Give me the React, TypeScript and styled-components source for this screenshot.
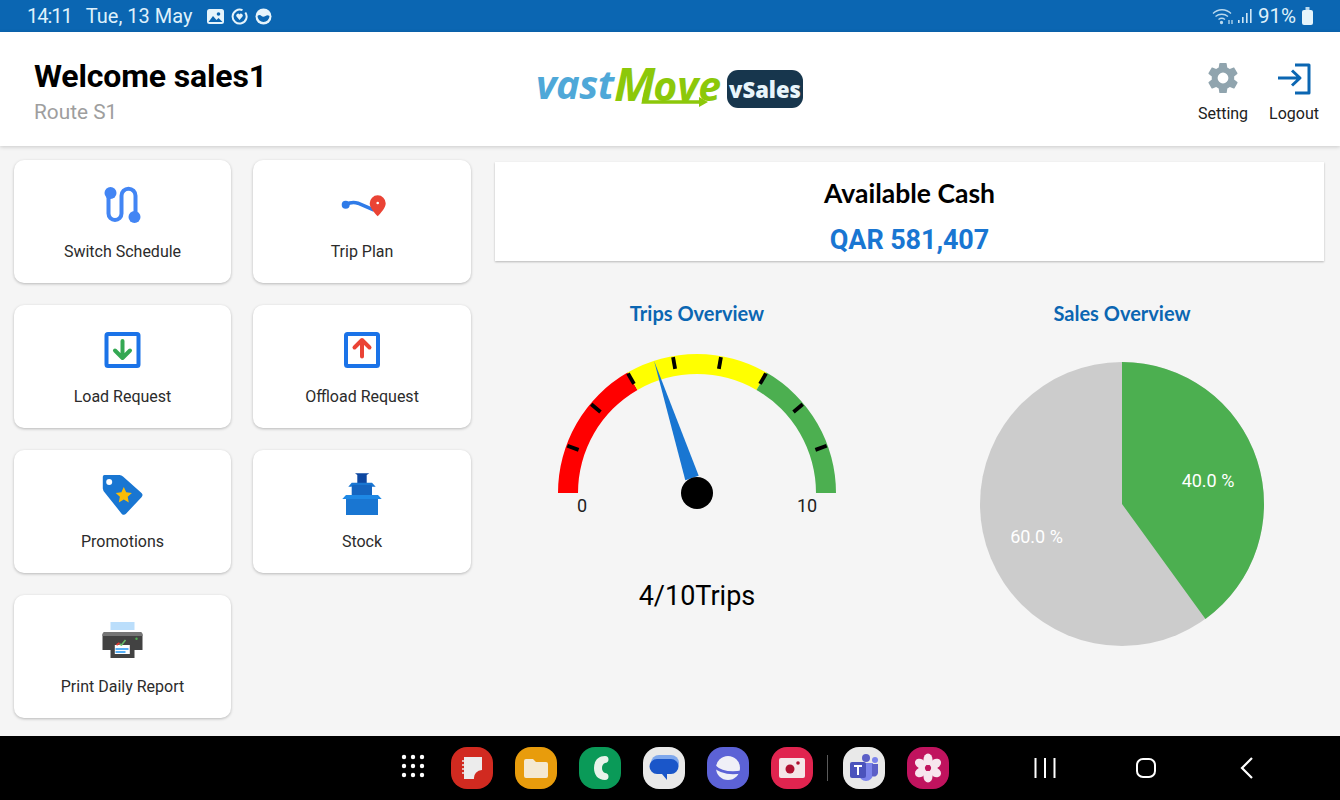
import React from 'react';
import styled, { createGlobalStyle } from 'styled-components';

const GlobalStyle = createGlobalStyle`
  html, body {
    margin: 0;
    padding: 0;
    background: #f5f5f5;
    font-family: Roboto, "Liberation Sans", sans-serif;
  }
`;

const Screen = styled.div`
  width: 1340px;
  height: 800px;
  display: flex;
  flex-direction: column;
  overflow: hidden;
  background: #f5f5f5;
`;

const StatusBar = styled.div`
  height: 32px;
  flex: none;
  background: #0b66b2;
  color: #dff1fb;
  display: flex;
  align-items: center;
  justify-content: space-between;
  padding: 0 27px;
  font-size: 20px;
`;

const StatusGroup = styled.div`
  display: flex;
  align-items: center;
`;

const StatusTime = styled.span`
  letter-spacing: -1px;
`;

const StatusDate = styled.span`
  margin-left: 14px;
`;

const StatusIcons = styled.div`
  display: flex;
  align-items: center;
  gap: 7px;
  margin-left: 15px;
`;

const StatusPercent = styled.span`
  margin-left: 6px;
  font-size: 20.5px;
`;

const BatteryIcon = styled.svg`
  margin-left: 6px;
`;

const Header = styled.header`
  height: 114px;
  flex: none;
  background: #fff;
  box-shadow: 0 1px 4px rgba(0, 0, 0, 0.18);
  display: grid;
  grid-template-columns: 1fr auto 1fr;
  align-items: center;
  padding: 0 21px 0 34px;
  position: relative;
`;

const Greeting = styled.div`
  display: flex;
  flex-direction: column;
  gap: 4px;
  padding-top: 3px;
`;

const Welcome = styled.div`
  font-size: 32px;
  font-weight: 700;
  line-height: 38px;
  letter-spacing: -0.15px;
  color: #000;
`;

const RouteName = styled.div`
  font-size: 20.800px;
  line-height: 26px;
  color: #9e9e9e;
`;

const Logo = styled.div`
  position: relative;
  width: 267px;
  height: 46px;
  margin-right: 14px;
  display: flex;
  align-items: center;
  font-family: "Open Sans", sans-serif;
  font-style: italic;
  font-weight: 700;
`;

const LogoVast = styled.span`
  width: 78px;
  flex: none;
  margin-top: -10px;
  font-size: 40px;
  line-height: 46px;
  letter-spacing: -0.5px;
  color: #4fa8d8;
`;

const LogoMove = styled.span`
  width: 113px;
  flex: none;
  margin-top: -10px;
  font-size: 41px;
  line-height: 46px;
  color: #8cc80a;
`;

const LogoBigLetter = styled.span`
  font-size: 47px;
  letter-spacing: -2px;
`;

const LogoBadge = styled.span`
  width: 76px;
  height: 38px;
  flex: none;
  border-radius: 11px;
  background: #17364d;
  color: #e8f5fb;
  font-style: normal;
  font-weight: 800;
  font-size: 22px;
  display: flex;
  align-items: center;
  justify-content: center;
`;

const LogoArrow = styled.svg`
  position: absolute;
  left: 0;
  top: 0;
`;

const HeaderActions = styled.div`
  display: flex;
  justify-content: flex-end;
  gap: 21px;
  padding-top: 6px;
`;

const HeaderAction = styled.div`
  display: flex;
  flex-direction: column;
  align-items: center;
  gap: 8px;
  font-size: 16px;
  line-height: 20px;
  color: #212121;
`;

const Body = styled.main`
  flex: 1;
  display: flex;
  min-height: 0;
`;

const MenuGrid = styled.div`
  width: 495px;
  flex: none;
  box-sizing: border-box;
  padding: 14px 24px 0 14px;
  display: grid;
  grid-template-columns: 217px 218px;
  grid-auto-rows: 123px;
  column-gap: 22px;
  row-gap: 22px;
  align-content: start;
`;

const MenuCard = styled.div`
  background: #fff;
  border-radius: 10px;
  box-shadow: 0 1px 3px rgba(0, 0, 0, 0.25);
  display: flex;
  flex-direction: column;
  align-items: center;
  padding-top: 23px;
  box-sizing: border-box;
`;

const MenuLabel = styled.div`
  margin-top: 11px;
  font-size: 16px;
  line-height: 20px;
  color: #2b2b2b;
`;

const Content = styled.section`
  flex: 1;
  display: flex;
  flex-direction: column;
  padding: 16px 16px 0 0;
  min-width: 0;
`;

const CashCard = styled.div`
  height: 99px;
  background: #fff;
  box-shadow: 0 1px 2px rgba(0, 0, 0, 0.25);
  display: flex;
  flex-direction: column;
  align-items: center;
  padding-top: 14px;
  box-sizing: border-box;
`;

const CashTitle = styled.div`
  font-family: Lato, "Open Sans", sans-serif;
  font-size: 26.500px;
  font-weight: 700;
  line-height: 34px;
  color: #000;
`;

const CashValue = styled.div`
  margin-top: 13px;
  font-size: 27px;
  font-weight: 700;
  line-height: 34px;
  letter-spacing: -0.1px;
  color: #1976d2;
`;

const Charts = styled.div`
  display: grid;
  grid-template-columns: 404px 1fr;
  margin-top: 39px;
`;

const ChartColumn = styled.div<{ $inset?: number }>`
  display: flex;
  flex-direction: column;
  align-items: center;
  padding-left: ${(p) => p.$inset ?? 0}px;
`;

const ChartTitle = styled.div`
  font-family: Lato, "Open Sans", sans-serif;
  font-size: 20px;
  font-weight: 700;
  line-height: 26px;
  padding-bottom: 2px;
  color: #0b66b2;
`;

const GaugeWrap = styled.div`
  margin-top: 25px;
  height: 170px;
`;

const GaugeCaption = styled.div`
  margin-top: 55px;
  font-size: 27px;
  line-height: 36px;
  color: #000;
`;

const PieWrap = styled.div`
  margin-top: 34px;
`;

const NavBar = styled.nav`
  height: 64px;
  flex: none;
  background: #000;
  display: flex;
  align-items: center;
  padding-left: 401px;
`;

const AppTile = styled.div<{ $bg: string }>`
  width: 42px;
  height: 42px;
  border-radius: 16px;
  background: ${(p) => p.$bg};
  flex: none;
  margin-left: 22px;
  display: flex;
  align-items: center;
  justify-content: center;
`;

const GridButton = styled.div`
  width: 27px;
  flex: none;
  margin-right: 1px;
`;

const Divider = styled.div`
  width: 1px;
  height: 26px;
  background: #5a5a5a;
  margin-left: 14px;
  margin-right: -7px;
  flex: none;
`;

const NavKeys = styled.div`
  display: flex;
  align-items: center;
  margin-left: 84px;
  gap: 77px;
`;

const GAUGE_X = 697;
const GAUGE_Y = 493;

const polar = (r: number, deg: number) => {
  const a = (deg * Math.PI) / 180;
  return [GAUGE_X - r * Math.cos(a), GAUGE_Y - r * Math.sin(a)];
};

const arcPath = (outer: number, inner: number, from: number, to: number) => {
  const [x1, y1] = polar(outer, from);
  const [x2, y2] = polar(outer, to);
  const [x3, y3] = polar(inner, to);
  const [x4, y4] = polar(inner, from);
  return `M${x1} ${y1}A${outer} ${outer} 0 0 1 ${x2} ${y2}L${x3} ${y3}A${inner} ${inner} 0 0 0 ${x4} ${y4}Z`;
};

// svg coordinates below are page pixels, the viewBox does the shifting
function Gauge() {
  const ticks = [20, 40, 60, 80, 100, 120, 140, 160];
  const [tipX, tipY] = polar(139, 72);
  return (
    <svg width="290" height="170" viewBox="552 353 290 170">
      <path d={arcPath(139, 119, 0, 60)} fill="#ff0000" />
      <path d={arcPath(139, 119, 60, 120)} fill="#ffff00" />
      <path d={arcPath(139, 119, 120, 180)} fill="#4caf50" />
      {ticks.map((d) => {
        const [x1, y1] = polar(138, d);
        const [x2, y2] = polar(126, d);
        return <line key={d} x1={x1} y1={y1} x2={x2} y2={y2} stroke="#000" strokeWidth="3.8" />;
      })}
      <polygon points={`${tipX},${tipY} 698.7,475.8 685.3,480.2`} fill="#1976d2" />
      <circle cx={GAUGE_X} cy={GAUGE_Y} r="16" fill="#000" />
      <text x="582" y="512" textAnchor="middle" fontFamily="Roboto, sans-serif" fontSize="18" fill="#212121">0</text>
      <text x="807" y="512" textAnchor="middle" fontFamily="Roboto, sans-serif" fontSize="18" fill="#212121">10</text>
    </svg>
  );
}

function Pie() {
  const r = 142;
  const a = 2 * Math.PI * 0.4;
  const x = r + r * Math.sin(a);
  const y = r - r * Math.cos(a);
  return (
    <svg width="284" height="284" viewBox="0 0 284 284">
      <circle cx={r} cy={r} r={r} fill="#cccccc" />
      <path d={`M${r} ${r}L${r} 0A${r} ${r} 0 0 1 ${x} ${y}Z`} fill="#4caf50" />
      <text x="228" y="125" textAnchor="middle" fontFamily="Roboto, sans-serif" fontSize="18" fill="#fff">40.0 %</text>
      <text x="56.500" y="181" textAnchor="middle" fontFamily="Roboto, sans-serif" fontSize="18" fill="#fff">60.0 %</text>
    </svg>
  );
}

const SwitchIcon = () => (
  <svg width="48" height="48" viewBox="98.500 183 48 48">
    <path d="M108 193v20.500a6.500 6.500 0 0 0 13 0V195.700a6.900 6.900 0 0 1 14 0V217" fill="none" stroke="#4285f4" strokeWidth="4" />
    <circle cx="110" cy="193" r="6" fill="#4285f4" />
    <circle cx="134" cy="217" r="6" fill="#4285f4" />
  </svg>
);

const TripIcon = () => (
  <svg width="48" height="48" viewBox="338 183 48 48">
    <path d="M346 204.700c4-2.400 8-2.600 12-1.500l15 6.500" fill="none" stroke="#2f7be8" strokeWidth="3.600" strokeLinecap="round" />
    <circle cx="345.700" cy="204.700" r="4" fill="#2f7be8" />
    <path d="M377.700 195.300a8 8 0 0 1 8 8c0 4.600-4.800 9.500-8 13-3.200-3.500-8-8.400-8-13a8 8 0 0 1 8-8Z" fill="#ea4335" />
    <circle cx="377.700" cy="203" r="1.300" fill="#fff" />
  </svg>
);

const LoadIcon = () => (
  <svg width="48" height="48" viewBox="98.500 328 48 48">
    <rect x="106" y="334" width="32" height="32" rx="1.500" fill="#fff" stroke="#1b73e8" strokeWidth="4" />
    <path d="M122 341v17M114.500 350.500l7.500 7.500 7.500-7.500" fill="none" stroke="#34a853" strokeWidth="4" strokeLinecap="round" strokeLinejoin="round" />
  </svg>
);

const OffloadIcon = () => (
  <svg width="48" height="48" viewBox="338 328 48 48">
    <rect x="346" y="334" width="32" height="32" rx="1.500" fill="#fff" stroke="#1b73e8" strokeWidth="4" />
    <path d="M362 356.500V340M354.500 347.500l7.500-7.500 7.500 7.500" fill="none" stroke="#ea4335" strokeWidth="4" strokeLinecap="round" strokeLinejoin="round" />
  </svg>
);

const TagIcon = () => (
  <svg width="48" height="48" viewBox="98.500 473 48 48">
    <path d="M104 475h15a5 5 0 0 1 3.500 1.500l18.500 16.500a3 3 0 0 1 0 4.200l-15.500 16.500a3 3 0 0 1-4.200.2L105 493.500a7 7 0 0 1-2.700-5V476.700a1.700 1.700 0 0 1 1.700-1.700Z" fill="#1976d2" />
    <circle cx="108.700" cy="482" r="3" fill="#fff" />
    <path d="M123.300 487l2.400 5.200 5.700.7-4.200 3.900 1.100 5.600-5-2.800-5 2.800 1.100-5.600-4.200-3.900 5.700-.7Z" fill="#fbbc05" />
  </svg>
);

const StockIcon = () => (
  <svg width="48" height="48" viewBox="338 473 48 48">
    <path d="M355 473.300h14.300l-2.600 1.700v10h-9.400v-10Z" fill="#0d47a1" />
    <path d="M351.700 485H372v13.300h-20.300Z" fill="#1565c0" />
    <path d="M351.700 482.700h20.300l3.700 4H372l-.8-1.700h-18.700l-.8 1.700h-3.400Z" fill="#1976d2" />
    <path d="M346 498h32v17h-32Z" fill="#1976d2" />
    <path d="M346 495h32l3.700 4H342.300Z" fill="#1e88e5" />
  </svg>
);

const PrinterIcon = () => (
  <svg width="48" height="48" viewBox="98.500 618 48 48">
    <rect x="110" y="622" width="24" height="8" fill="#bbdefb" />
    <path d="M105 632h34a3 3 0 0 1 3 3v15h-8v8h-24v-8h-8v-15a3 3 0 0 1 3-3Z" fill="#424242" />
    <path d="M105 632h34a3 3 0 0 1 3 3v1h-40v-1a3 3 0 0 1 3-3Z" fill="#757575" />
    <rect x="114.300" y="645" width="15" height="9" fill="#fff" />
    <path d="M115 649h13M115 652h10" stroke="#2196f3" strokeWidth="1.500" />
    <path d="M119 644l2 1 4-5" fill="none" stroke="#66bb6a" strokeWidth="1.600" />
    <path d="M116 645l3-2" stroke="#e53935" strokeWidth="1.800" />
    <circle cx="136" cy="638.700" r="1.200" fill="#4caf50" />
  </svg>
);

export default function App() {
  return (
    <Screen>
      <GlobalStyle />
      <StatusBar>
        <StatusGroup>
          <StatusTime>14:11</StatusTime>
          <StatusDate>Tue, 13 May</StatusDate>
          <StatusIcons>
            <svg width="17" height="15" viewBox="0 0 17 15">
              <rect width="17" height="15" rx="2.500" fill="#e6f4fb" />
              <circle cx="11.500" cy="5" r="1.800" fill="#0b66b2" />
              <path d="M1.500 13l4.500-6 3.500 4 2-2 4 4Z" fill="#0b66b2" />
            </svg>
            <svg width="17" height="17" viewBox="0 0 17 17">
              <path d="M14.300 4.500a7 7 0 1 1-2.800-2.300" fill="none" stroke="#e6f4fb" strokeWidth="2" />
              <path d="M8.500 12 5.500 8.500a1.800 1.800 0 0 1 3-2 1.800 1.800 0 0 1 3 2Z" fill="#e6f4fb" />
            </svg>
            <svg width="17" height="17" viewBox="0 0 17 17">
              <circle cx="8.500" cy="8.500" r="8" fill="#e6f4fb" />
              <path d="M2.500 8c1.500-1.500 3-1 4 0s2.500 1 4 0 2.500-1 4 0a6 6 0 0 1-12 0Z" fill="#0b66b2" />
            </svg>
          </StatusIcons>
        </StatusGroup>
        <StatusGroup>
          <svg width="22" height="17" viewBox="0 0 22 17" fill="none" stroke="#b9d9ee" strokeWidth="1.300">
            <path d="M1 5.500c5-5 13-5 18 0M3.500 8.500c3.500-3 9-3 12.500 0M6.500 11.500c2-1.500 4.500-1.500 6.500 0" />
            <circle cx="9.500" cy="14.500" r="1" fill="#b9d9ee" />
            <path d="M17 12v4M20 16v-4" />
          </svg>
          <svg width="18" height="16" viewBox="0 0 18 16" fill="#cfe6f5">
            <rect x="4" y="12" width="1.600" height="3" />
            <rect x="8" y="9" width="1.600" height="6" />
            <rect x="12" y="5" width="1.600" height="10" />
            <rect x="16" y="1" width="1.600" height="14" />
          </svg>
          <StatusPercent>91%</StatusPercent>
          <BatteryIcon width="11" height="18" viewBox="0 0 11 18">
            <rect x="0" y="3" width="11" height="15" rx="2" fill="#e6f4fb" />
            <rect x="3.500" y="0" width="4" height="3" fill="#b9d9ee" />
          </BatteryIcon>
        </StatusGroup>
      </StatusBar>

      <Header>
        <Greeting>
          <Welcome>Welcome sales1</Welcome>
          <RouteName>Route S1</RouteName>
        </Greeting>
        <Logo>
          <LogoVast>vast</LogoVast>
          <LogoMove><LogoBigLetter>M</LogoBigLetter>ove</LogoMove>
          <LogoBadge>vSales</LogoBadge>
          <LogoArrow width="267" height="46" viewBox="0 0 267 46">
            <path d="M110 24l-2.500 12H165" fill="none" stroke="#8cc80a" strokeWidth="3.500" />
            <path d="M163 31l9 5-9 5Z" fill="#8cc80a" />
          </LogoArrow>
        </Logo>
        <HeaderActions>
          <HeaderAction>
            <svg width="36" height="36" viewBox="0 0 24 24" fill="#90a4ae">
              <path d="M19.400 13c.04-.3.06-.65.06-1s-.02-.7-.07-1l2.100-1.650c.2-.15.24-.42.12-.64l-2-3.460c-.12-.22-.39-.3-.61-.22l-2.490 1a7.300 7.300 0 0 0-1.690-.98l-.38-2.650A.49.49 0 0 0 14 2h-4c-.25 0-.46.18-.49.42l-.38 2.650c-.61.25-1.170.59-1.690.98l-2.490-1c-.23-.09-.49 0-.61.22l-2 3.460c-.13.22-.07.49.12.64L4.570 11c-.04.3-.07.67-.07 1s.02.7.07 1l-2.100 1.650c-.2.15-.24.42-.12.64l2 3.460c.12.22.39.3.61.22l2.490-1c.52.4 1.080.73 1.690.98l.38 2.650c.03.24.24.42.49.42h4c.25 0 .46-.18.49-.42l.38-2.650c.61-.25 1.170-.59 1.690-.98l2.490 1c.23.09.49 0 .61-.22l2-3.460c.12-.22.07-.49-.12-.64L19.400 13ZM12 15.600a3.600 3.600 0 1 1 0-7.200 3.600 3.600 0 0 1 0 7.200Z" />
            </svg>
            <span>Setting</span>
          </HeaderAction>
          <HeaderAction>
            <svg width="36" height="36" viewBox="0 0 36 36" fill="none" stroke="#0b66b2" strokeWidth="3" strokeLinejoin="round">
              <path d="M19 5h14v28H19M2 18h21M16 10.500l8 7.500-8 7.500" />
            </svg>
            <span>Logout</span>
          </HeaderAction>
        </HeaderActions>
      </Header>

      <Body>
        <MenuGrid>
          <MenuCard><SwitchIcon /><MenuLabel>Switch Schedule</MenuLabel></MenuCard>
          <MenuCard><TripIcon /><MenuLabel>Trip Plan</MenuLabel></MenuCard>
          <MenuCard><LoadIcon /><MenuLabel>Load Request</MenuLabel></MenuCard>
          <MenuCard><OffloadIcon /><MenuLabel>Offload Request</MenuLabel></MenuCard>
          <MenuCard><TagIcon /><MenuLabel>Promotions</MenuLabel></MenuCard>
          <MenuCard><StockIcon /><MenuLabel>Stock</MenuLabel></MenuCard>
          <MenuCard><PrinterIcon /><MenuLabel>Print Daily Report</MenuLabel></MenuCard>
        </MenuGrid>

        <Content>
          <CashCard>
            <CashTitle>Available Cash</CashTitle>
            <CashValue>QAR 581,407</CashValue>
          </CashCard>
          <Charts>
            <ChartColumn>
              <ChartTitle>Trips Overview</ChartTitle>
              <GaugeWrap><Gauge /></GaugeWrap>
              <GaugeCaption>4/10Trips</GaugeCaption>
            </ChartColumn>
            <ChartColumn $inset={21}>
              <ChartTitle>Sales Overview</ChartTitle>
              <PieWrap><Pie /></PieWrap>
            </ChartColumn>
          </Charts>
        </Content>
      </Body>

      <NavBar>
        <GridButton>
          <svg width="27" height="27" viewBox="0 0 27 27" fill="#fff">
            {[4, 13, 22].flatMap((y) => [3, 12, 21].map((x) => <circle key={`${x}-${y}`} cx={x} cy={y} r="2.200" />))}
          </svg>
        </GridButton>
        <AppTile $bg="#d12a20">
          <svg width="28" height="28" viewBox="0 0 28 28">
            <path d="M6 3h18v13a8 8 0 0 0-8 9H6Z" fill="#ececec" />
            <path d="M4 7h4M4 11h4M4 15h4M4 19h4" stroke="#ececec" strokeWidth="1.500" />
          </svg>
        </AppTile>
        <AppTile $bg="#e89c0c">
          <svg width="28" height="24" viewBox="0 0 28 24"><path d="M2 5a2 2 0 0 1 2-2h7l3 3h10a2 2 0 0 1 2 2v12a2 2 0 0 1-2 2H4a2 2 0 0 1-2-2Z" fill="#f4e9d2" /></svg>
        </AppTile>
        <AppTile $bg="#0a9a58">
          <svg width="26" height="30" viewBox="0 0 26 30"><path d="M18 3c-7 0-11 5-11 12s4 12 11 12c2.500 0 3.500-1.500 3.500-3.500S20 20 18 20c-2-1-3-2.500-3-5s1-4 3-5c2 0 3.500-1.500 3.500-3.500S20.500 3 18 3Z" fill="#e8f3ea" /></svg>
        </AppTile>
        <AppTile $bg="#e9e9e9">
          <svg width="32" height="32" viewBox="0 0 32 32">
            <path d="M11 3h12a8 8 0 0 1 0 16H11a8 8 0 0 1 0-16Z" fill="#7ea7ec" />
            <path d="M9 7h14a7 7 0 0 1 0 15h-4v6l-5-6H9a7.500 7.500 0 0 1 0-15Z" fill="#1a56c9" />
          </svg>
        </AppTile>
        <AppTile $bg="#5c62d6">
          <svg width="34" height="34" viewBox="0 0 34 34">
            <circle cx="17" cy="17" r="12" fill="#efeff7" />
            <path d="M3 15c6 6 16 8 28 6" fill="none" stroke="#5c62d6" strokeWidth="3" />
          </svg>
        </AppTile>
        <AppTile $bg="#e0244f">
          <svg width="32" height="26" viewBox="0 0 32 26">
            <rect x="3" y="3" width="26" height="20" rx="2" fill="#f4e6e8" />
            <circle cx="14" cy="14" r="4.500" fill="#b01030" />
            <circle cx="22" cy="8" r="1.800" fill="#b01030" />
          </svg>
        </AppTile>
        <Divider />
        <AppTile $bg="#e9e9e9">
          <svg width="32" height="32" viewBox="0 0 32 32">
            <circle cx="18" cy="6" r="4" fill="#5b5fc7" />
            <circle cx="27" cy="8" r="3" fill="#7b83eb" />
            <path d="M11 11h14v11a7 7 0 0 1-14 0Z" fill="#7b83eb" />
            <path d="M24 12h6v9a4 4 0 0 1-6 3Z" fill="#5b5fc7" />
            <rect x="2" y="10" width="16" height="16" rx="2" fill="#4b53bc" />
            <path d="M6 14h8M10 14v9" stroke="#fff" strokeWidth="2" />
          </svg>
        </AppTile>
        <AppTile $bg="#c0135e">
          <svg width="32" height="32" viewBox="0 0 32 32">
            {[0, 60, 120, 180, 240, 300].map((d) => (
              <ellipse key={d} cx="16" cy="7.500" rx="4.500" ry="6" fill="#f7e6ee" transform={`rotate(${d} 16 16)`} />
            ))}
            <circle cx="16" cy="16" r="3" fill="#c0135e" />
          </svg>
        </AppTile>
        <NavKeys>
          <svg width="24" height="22" viewBox="0 0 24 22" stroke="#fff" strokeWidth="2"><path d="M2.500 1v20M12 1v20M21.500 1v20" /></svg>
          <svg width="24" height="24" viewBox="0 0 24 24" fill="none" stroke="#fff" strokeWidth="2"><rect x="3" y="3" width="18" height="18" rx="6" /></svg>
          <svg width="24" height="24" viewBox="0 0 24 24" fill="none" stroke="#fff" strokeWidth="2.200"><path d="M17 2 7 12l10 10" /></svg>
        </NavKeys>
      </NavBar>
    </Screen>
  );
}
